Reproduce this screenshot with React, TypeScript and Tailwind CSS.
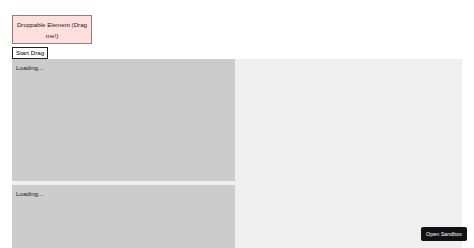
export default function App() {
  return (
    <div className="relative h-[248px] w-[474px] overflow-hidden bg-white text-[#222]" style={{ fontFamily: '"Liberation Sans", Arial, sans-serif' }}>
      <div className="pl-[12px] pt-[15px]">
        <div className="flex h-[29px] w-[80px] items-center justify-center border border-[#9a7a7a] bg-[#ffdede] px-[3px] text-center text-[6.2px] leading-[11px] text-[#222]">
          Droppable Element (Drag me!)
        </div>
        <button className="mt-[3px] block h-[12px] border border-[#222] bg-white px-[3px] text-[6.2px] leading-[10px] text-black">
          Start Drag
        </button>
      </div>
      <div className="ml-[12px] flex w-[450px] bg-[#efefef]">
        <div className="flex w-[223px] flex-col gap-[4px]">
          <div className="h-[122px] bg-[#cccccc] px-[4px] pt-[4px] text-[6.2px] leading-[9px] text-[#222]">Loading...</div>
          <div className="h-[70px] bg-[#cccccc] px-[4px] pt-[4px] text-[6.2px] leading-[9px] text-[#222]">Loading...</div>
        </div>
      </div>
      <button className="absolute left-[421px] top-[227px] h-[14px] rounded-[2px] bg-[#111] px-[5px] text-[5.4px] leading-[14px] text-white">
        Open Sandbox
      </button>
    </div>
  )
}
